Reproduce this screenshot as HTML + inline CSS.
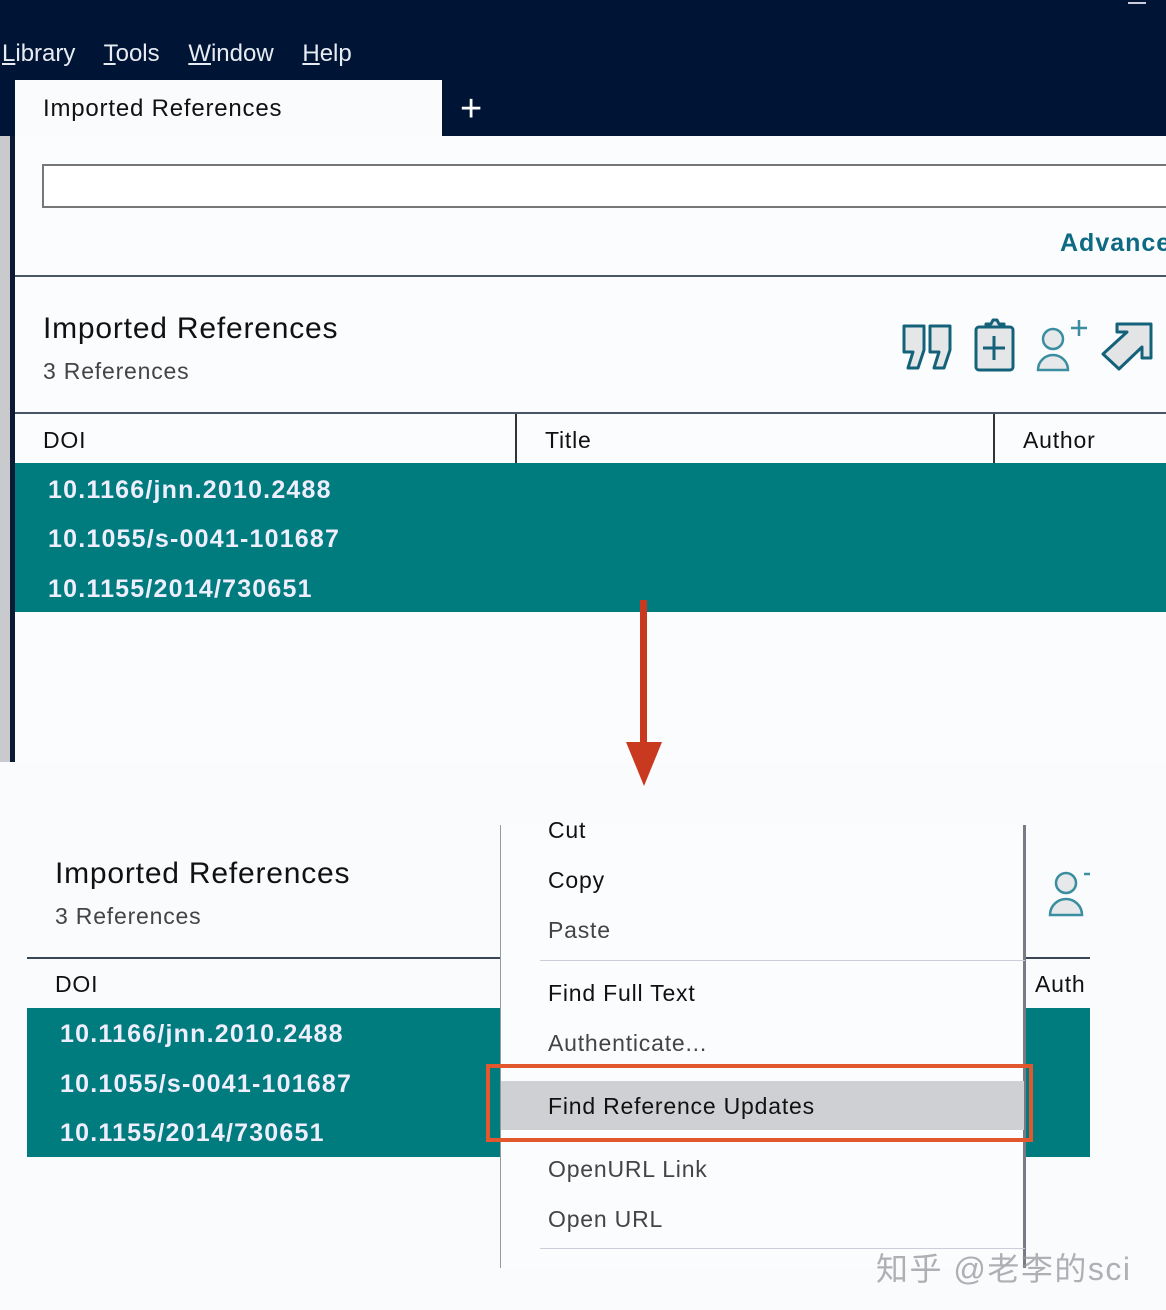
<!DOCTYPE html>
<html><head><meta charset="utf-8"><style>
*{margin:0;padding:0;box-sizing:border-box}
body{width:1166px;height:1310px;overflow:hidden;background:#fafbfd;font-family:"Liberation Sans","Noto Sans CJK SC",sans-serif;position:relative;color:#111}
.a{position:absolute}
.menu span{margin-right:22px}
.menu u{text-decoration:underline}
.doi{color:#eef;font-weight:bold;font-size:25px;letter-spacing:1.2px}
.mi{position:absolute;left:548px;font-size:23px;color:#111;letter-spacing:0.8px}
.mi.g{color:#444}
.t{letter-spacing:0.8px}
</style></head><body>
<div class="a" style="left:0;top:0;width:1166px;height:136px;background:#001535"></div>
<div class="a" style="left:1128px;top:2px;width:18px;height:2px;background:#ccd"></div>
<div class="a menu" style="left:2px;top:40px;font-size:24px;color:#e8ecf2"><span><u>L</u>ibrary</span> <span><u>T</u>ools</span> <span><u>W</u>indow</span> <span><u>H</u>elp</span></div>
<div class="a" style="left:15px;top:80px;width:427px;height:60px;background:#fafbfd"></div>
<div class="a t" style="left:43px;top:95px;font-size:24px;color:#111">Imported References</div>
<div class="a" style="left:460px;top:88px;font-size:38px;color:#fff;font-weight:300">+</div>
<div class="a" style="left:0;top:136px;width:10px;height:626px;background:#c9cacd"></div>
<div class="a" style="left:10px;top:136px;width:5px;height:626px;background:#0b1a35"></div>
<div class="a" style="left:15px;top:136px;width:1151px;height:626px;background:#fbfcfe"></div>
<div class="a" style="left:42px;top:164px;width:1130px;height:44px;border:2px solid #777;background:#fff"></div>
<div class="a" style="left:1060px;top:229px;font-size:25px;color:#0e6a82;font-weight:bold;letter-spacing:1px">Advance</div>
<div class="a" style="left:15px;top:275px;width:1151px;height:2px;background:#4a5566"></div>
<div class="a t" style="left:43px;top:312px;font-size:30px">Imported References</div>
<div class="a t" style="left:43px;top:358px;font-size:23px;color:#444">3 References</div>
<svg class="a" style="left:898px;top:318px" width="268" height="60" viewBox="0 0 268 60">
 <g fill="#e4e6e8" stroke="#14627a" stroke-width="3" stroke-linejoin="round">
  <path d="M6 8h20v24l-6 18h-10l5-16h-9z"/>
  <path d="M32 8h20v24l-6 18h-10l5-16h-9z"/>
  <rect x="78" y="9" width="37" height="43" rx="3"/>
  <path d="M88 9v-3h5l2-4h4l2 4h5v3z"/>
  <path d="M96 18v24M85 30h22" fill="none"/>
 </g>
 <g fill="#e6e8ea" stroke="#3b8ea0" stroke-width="2.5">
  <circle cx="155" cy="21" r="10"/>
  <path d="M140 52a15 15 0 0 1 30 0z"/>
  <path d="M181 2v16M173 10h16" fill="none"/>
 </g>
 <path d="M205 36l24-22h-10v-8h34v34h-9v-11l-23 22z" fill="#e2e4e6" stroke="#14627a" stroke-width="3" stroke-linejoin="round"/>
</svg>
<div class="a" style="left:15px;top:412px;width:1151px;height:2px;background:#4a5566"></div>
<div class="a" style="left:515px;top:414px;width:2px;height:49px;background:#333"></div>
<div class="a" style="left:993px;top:414px;width:2px;height:49px;background:#333"></div>
<div class="a t" style="left:43px;top:427px;font-size:23px">DOI</div>
<div class="a t" style="left:545px;top:427px;font-size:23px">Title</div>
<div class="a t" style="left:1023px;top:427px;font-size:23px">Author</div>
<div class="a" style="left:15px;top:463px;width:1151px;height:149px;background:#007b7e"></div>
<div class="a doi" style="left:48px;top:476px">10.1166/jnn.2010.2488</div>
<div class="a doi" style="left:48px;top:525px">10.1055/s-0041-101687</div>
<div class="a doi" style="left:48px;top:575px">10.1155/2014/730651</div>
<div class="a" style="left:640px;top:600px;width:7px;height:148px;background:#c8391f"></div>
<svg class="a" style="left:626px;top:742px" width="36" height="44"><path d="M0 0h36l-18 44z" fill="#c8391f"/></svg>
<div class="a t" style="left:55px;top:857px;font-size:30px">Imported References</div>
<div class="a t" style="left:55px;top:903px;font-size:23px;color:#444">3 References</div>
<div class="a" style="left:27px;top:957px;width:1063px;height:2px;background:#3a4556"></div>
<div class="a t" style="left:55px;top:971px;font-size:23px">DOI</div>
<div class="a t" style="left:1035px;top:971px;font-size:23px">Auth</div>
<svg class="a" style="left:1046px;top:866px" width="44" height="52"><g fill="#e6e8ea" stroke="#3b8ea0" stroke-width="2.5"><circle cx="20" cy="17" r="10"/><path d="M4 49a16 16 0 0 1 32 0z"/><path d="M38 8h6" fill="none"/></g></svg>
<div class="a" style="left:27px;top:1008px;width:1063px;height:149px;background:#007b7e"></div>
<div class="a doi" style="left:60px;top:1020px">10.1166/jnn.2010.2488</div>
<div class="a doi" style="left:60px;top:1070px">10.1055/s-0041-101687</div>
<div class="a doi" style="left:60px;top:1119px">10.1155/2014/730651</div>
<div class="a" style="left:500px;top:825px;width:526px;height:443px;background:#fbfcfe;border-left:1px solid #999;border-right:3px solid #7a7a84"></div>
<div class="mi" style="top:817px">Cut</div>
<div class="mi" style="top:867px">Copy</div>
<div class="mi g" style="top:917px">Paste</div>
<div class="a" style="left:540px;top:960px;width:485px;height:1px;background:#ccd"></div>
<div class="mi" style="top:980px">Find Full Text</div>
<div class="mi g" style="top:1030px">Authenticate...</div>
<div class="a" style="left:501px;top:1081px;width:523px;height:49px;background:#cfd0d3"></div>
<div class="mi" style="top:1093px">Find Reference Updates</div>
<div class="a" style="left:486px;top:1064px;width:547px;height:78px;border:4px solid #e2572e"></div>
<div class="mi g" style="top:1156px">OpenURL Link</div>
<div class="mi g" style="top:1206px">Open URL</div>
<div class="a" style="left:540px;top:1248px;width:485px;height:1px;background:#ccd"></div>
<div class="a" style="left:876px;top:1244px;font-size:32px;letter-spacing:1.5px;color:rgba(150,150,155,0.75)">知乎 @老李的sci</div>
</body></html>
